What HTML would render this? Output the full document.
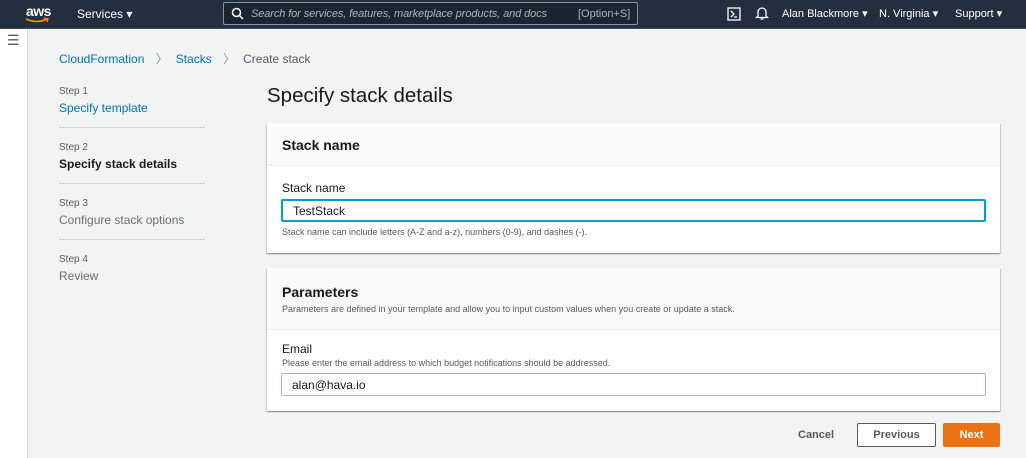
<!DOCTYPE html>
<html><head><style>
*{box-sizing:border-box;margin:0;padding:0}
body{width:1026px;height:458px;overflow:hidden;background:#f2f3f3;font-family:"Liberation Sans",sans-serif;position:relative;color:#16191f}
.top{position:absolute;left:0;top:0;width:1026px;height:29px;background:#232f3e;border-bottom:1px solid #3c4a5c;color:#fff;font-size:12px}
.top span{position:absolute;top:7px}
.side{position:absolute;left:0;top:29px;width:28px;height:429px;background:#fff;border-right:1px solid #d5dbdb}
.a{position:absolute;white-space:nowrap}
.card{position:absolute;left:267px;width:733px;background:#fff;box-shadow:0 1px 1px rgba(0,28,36,.3),1px 1px 1px rgba(0,28,36,.15),-1px 1px 1px rgba(0,28,36,.15)}
.hd{background:#fafafa;border-bottom:1px solid #eaeded}
.inp{position:absolute;left:14px;width:705px;height:23px;border:1px solid #aab7b8;border-radius:2px;font-size:12px;padding:4px 10px}
.step{position:absolute;left:59px;font-size:10px;color:#545b64}
.sl{position:absolute;left:59px;font-size:12px}
.hr{position:absolute;left:59px;width:146px;height:1px;background:#d5dbdb}
</style></head><body>
<div class="top">
<span style="left:26px;top:3px;font-size:14px;font-weight:bold;letter-spacing:-.5px">aws</span>
<svg style="position:absolute;left:25px;top:17px" width="26" height="7"><path d="M1 2 Q12 7 22 2" stroke="#f90" stroke-width="1.6" fill="none"/><path d="M19 1 L23 2 L22 5" stroke="#f90" stroke-width="1.2" fill="none"/></svg>
<span style="left:77px">Services ▾</span>
<div style="position:absolute;left:223px;top:2px;width:415px;height:23px;border:1px solid #879596;border-radius:2px;background:#1b2532"></div>
<svg style="position:absolute;left:231px;top:7px" width="13" height="13"><circle cx="5.5" cy="5.5" r="4" stroke="#fff" stroke-width="1.5" fill="none"/><path d="M8.5 8.5L12 12" stroke="#fff" stroke-width="1.5"/></svg>
<span style="left:251px;top:8px;font-size:11px;font-style:italic;color:#aab7b8;letter-spacing:-.1px">Search for services, features, marketplace products, and docs</span>
<span style="left:578px;top:8px;font-size:11px;color:#aab7b8">[Option+S]</span>
<svg style="position:absolute;left:727px;top:7px" width="14" height="14"><rect x="1" y="1" width="12" height="12" stroke="#fff" stroke-width="1.3" fill="none"/><path d="M4 4l3 3-3 3M7 10h3" stroke="#fff" stroke-width="1.3" fill="none"/></svg>
<svg style="position:absolute;left:755px;top:6px" width="14" height="15"><path d="M3 10V6a4 4 0 0 1 8 0v4l1.5 1.5h-11z M5.5 13h3" stroke="#fff" stroke-width="1.3" fill="none"/></svg>
<span style="left:782px;font-size:11px">Alan Blackmore ▾</span>
<span style="left:879px;font-size:11px">N. Virginia ▾</span>
<span style="left:955px;font-size:11px">Support ▾</span>
</div>
<div class="side"><div class="a" style="left:7px;top:3px;font-size:14px;color:#545b64">☰</div></div>
<div class="a" style="left:59px;top:50px;font-size:12px;color:#0073bb">CloudFormation <span style="color:#879596;margin:0 8px">〉</span>Stacks <span style="color:#879596;margin:0 8px">〉</span><span style="color:#545b64">Create stack</span></div>
<div class="step" style="top:86px">Step 1</div><div class="sl" style="top:101px;color:#0073bb">Specify template</div>
<div class="hr" style="top:127px"></div>
<div class="step" style="top:142px">Step 2</div><div class="sl" style="top:157px;font-weight:bold">Specify stack details</div>
<div class="hr" style="top:183px"></div>
<div class="step" style="top:198px">Step 3</div><div class="sl" style="top:213px;color:#687078">Configure stack options</div>
<div class="hr" style="top:239px"></div>
<div class="step" style="top:254px">Step 4</div><div class="sl" style="top:269px;color:#687078">Review</div>
<div class="a" style="left:267px;top:84px;font-size:20.5px">Specify stack details</div>
<div class="card" style="top:123px;height:130px">
<div class="hd" style="height:43px"><div class="a" style="left:15px;top:14px;font-size:14px;font-weight:bold">Stack name</div></div>
<div class="a" style="left:15px;top:58px;font-size:12px">Stack name</div>
<div class="inp" style="top:76px;border:2px solid #00a1c9;padding:3px 10px">TestStack</div>
<div class="a" style="left:15px;top:104px;font-size:9px;color:#545b64">Stack name can include letters (A-Z and a-z), numbers (0-9), and dashes (-).</div>
</div>
<div class="card" style="top:268px;height:143px">
<div class="hd" style="height:62px"><div class="a" style="left:15px;top:16px;font-size:14px;font-weight:bold">Parameters</div>
<div class="a" style="left:15px;top:36px;font-size:9px;color:#545b64">Parameters are defined in your template and allow you to input custom values when you create or update a stack.</div></div>
<div class="a" style="left:15px;top:74px;font-size:12px">Email</div>
<div class="a" style="left:15px;top:90px;font-size:9px;color:#545b64">Please enter the email address to which budget notifications should be addressed.</div>
<div class="inp" style="top:105px">alan@hava.io</div>
</div>
<div class="a" style="left:798px;top:429px;font-size:11px;font-weight:bold;color:#545b64">Cancel</div>
<div class="a" style="left:857px;top:423px;width:79px;height:24px;border:1px solid #545b64;border-radius:2px;background:#fff;font-size:11px;font-weight:bold;color:#545b64;text-align:center;line-height:22px">Previous</div>
<div class="a" style="left:943px;top:423px;width:57px;height:24px;background:#ec7211;border-radius:2px;font-size:11px;font-weight:bold;color:#fff;text-align:center;line-height:24px">Next</div>
</body></html>
